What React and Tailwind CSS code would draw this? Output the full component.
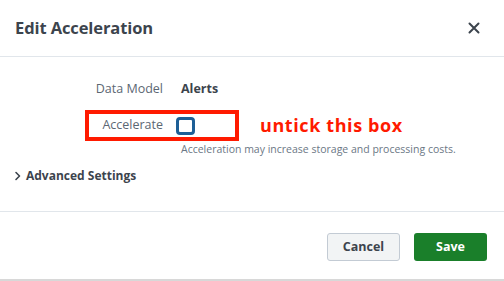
import React from 'react'

const CloseIcon = () => (
    <svg width="12" height="12" viewBox="0 0 12 12" className="text-[#3c444d]">
        <path d="M1.5 1.5 L10.5 10.5 M10.5 1.5 L1.5 10.5" stroke="currentColor" strokeWidth="2" strokeLinecap="round" />
    </svg>
)

const Chevron = () => (
    <svg width="8" height="10" viewBox="0 0 8 10" className="text-[#3c444d]">
        <path d="M2 1.5 L5.5 5 L2 8.5" stroke="currentColor" strokeWidth="1.6" fill="none" strokeLinecap="round" strokeLinejoin="round" />
    </svg>
)

export default function App() {
    return (
        <div className="w-[504px] h-[281px] bg-white flex flex-col font-['Open_Sans',sans-serif] text-[#3c444d] overflow-hidden">
            <div className="h-[57px] shrink-0 flex items-center justify-between pl-[15px] pr-[24px] border-b border-[#e1e6eb]">
                <div className="text-[16.5px] font-bold tracking-[-0.1px]">Edit Acceleration</div>
                <CloseIcon />
            </div>
            <div className="flex flex-col h-[155px] shrink-0 border-b border-[#e1e6eb]">
                <div className="flex items-center mt-[22px] h-[20px] text-[12.5px]">
                    <div className="w-[163px] text-right text-[#5c6773]">Data Model</div>
                    <div className="ml-[18px] font-bold">Alerts</div>
                </div>
                <div className="flex items-center mt-[11px]">
                    <div className="ml-[85px] w-[154px] h-[31px] border-[4px] border-[#ff1a00] flex items-center">
                        <div className="w-[74px] text-right text-[12.5px] text-[#5c6773]">Accelerate</div>
                        <div className="ml-[13px] w-[19px] h-[18px] rounded-[4px] border-[3px] border-[#1d5f96] bg-white"></div>
                    </div>
                    <div className="ml-[21px] text-[18px] font-bold text-[#ff1a00] tracking-[0.6px]">untick this box</div>
                </div>
                <div className="ml-[181px] mt-[1px] text-[10.5px] text-[#6b7785]">Acceleration may increase storage and processing costs.</div>
                <div className="flex items-center ml-[14px] mt-[9px] gap-[4px] text-[12px] font-bold">
                    <Chevron />
                    <span>Advanced Settings</span>
                </div>
            </div>
            <div className="flex justify-end gap-[14px] pr-[17px] pt-[21px] h-[69px] shrink-0 border-b-2 border-[#d8d8d8]">
                <button className="w-[73px] h-[28px] rounded-[3px] border border-[#c3cbd4] bg-[#f2f4f5] text-[12.5px] font-bold text-[#3c444d]">Cancel</button>
                <button className="w-[73px] h-[28px] rounded-[3px] bg-[#1a7f2a] text-[12.5px] font-bold text-white">Save</button>
            </div>
        </div>
    )
}
